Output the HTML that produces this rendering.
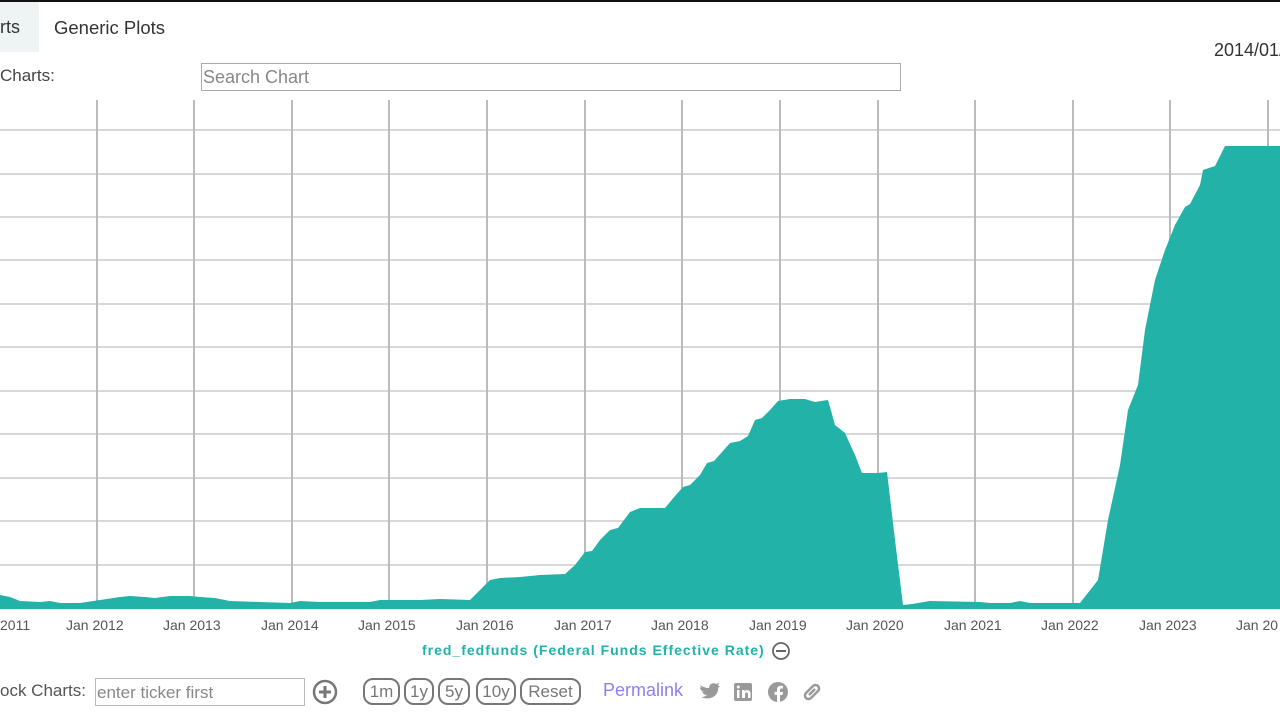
<!DOCTYPE html>
<html><head><meta charset="utf-8"><style>
body{margin:0;width:1280px;height:727px;overflow:hidden;background:#fff;font-family:"Liberation Sans",sans-serif;position:relative}
.t{position:absolute;white-space:nowrap}
.btn{position:absolute;top:678px;height:27px;border:2px solid #777;border-radius:10px;box-sizing:border-box;font-size:17px;color:#777;text-align:center;line-height:24px}
</style></head><body>
<div style="position:absolute;left:0;top:0;width:1280px;height:2px;background:#111"></div>
<div style="position:absolute;left:0;top:2px;width:39px;height:50px;background:#eef4f4"></div>
<div class="t" style="left:0;top:17px;font-size:18px;color:#333">rts</div>
<div class="t" style="left:54px;top:17px;font-size:18.5px;color:#333">Generic Plots</div>
<div class="t" style="left:1214px;top:40px;font-size:18px;color:#333">2014/01/</div>
<div class="t" style="left:0;top:66px;font-size:17px;color:#444">Charts:</div>
<div style="position:absolute;left:201px;top:63px;width:700px;height:28px;border:1px solid #aaa;box-sizing:border-box"></div>
<div class="t" style="left:203px;top:67px;font-size:18px;color:#888">Search Chart</div>
<svg style="position:absolute;left:0;top:0" width="1280" height="727">
<g stroke="#ccc" stroke-width="1.5">
<line x1="0" y1="130" x2="1280" y2="130"/><line x1="0" y1="174" x2="1280" y2="174"/><line x1="0" y1="217" x2="1280" y2="217"/><line x1="0" y1="260" x2="1280" y2="260"/><line x1="0" y1="304" x2="1280" y2="304"/><line x1="0" y1="347" x2="1280" y2="347"/><line x1="0" y1="391" x2="1280" y2="391"/><line x1="0" y1="434" x2="1280" y2="434"/><line x1="0" y1="478" x2="1280" y2="478"/><line x1="0" y1="521" x2="1280" y2="521"/><line x1="0" y1="565" x2="1280" y2="565"/>
</g>
<g stroke="#bbb" stroke-width="2">
<line x1="97" y1="100" x2="97" y2="609"/><line x1="194" y1="100" x2="194" y2="609"/><line x1="292" y1="100" x2="292" y2="609"/><line x1="389" y1="100" x2="389" y2="609"/><line x1="487" y1="100" x2="487" y2="609"/><line x1="585" y1="100" x2="585" y2="609"/><line x1="682" y1="100" x2="682" y2="609"/><line x1="780" y1="100" x2="780" y2="609"/><line x1="878" y1="100" x2="878" y2="609"/><line x1="975" y1="100" x2="975" y2="609"/><line x1="1073" y1="100" x2="1073" y2="609"/><line x1="1170" y1="100" x2="1170" y2="609"/><line x1="1268" y1="100" x2="1268" y2="609"/>
</g>
<polygon fill="#22b2a8" points="0,595 10,597 20,601 40,602 50,601 60,603 80,603 100,600 120,597 130,596 145,597 155,598 170,596 190,596 200,597 215,598 230,601 260,602 290,603 300,601 320,602 370,602 380,600 420,600 440,599 470,600 480,590 490,580 500,578 520,577 540,575 565,574 575,565 585,552 592,551 600,540 610,530 618,528 630,512 640,508 665,508 675,496 683,487 690,485 700,475 707,463 714,461 722,452 730,443 740,441 748,436 755,420 762,418 770,410 778,401 790,399 805,399 815,402 828,400 835,425 845,433 855,455 862,473 878,473 887,472 895,540 903,605 912,604 930,601 980,602 990,603 1010,603 1020,601 1030,603 1080,603 1098,580 1108,520 1120,465 1128,410 1138,385 1145,330 1155,280 1165,250 1175,225 1185,207 1190,204 1200,185 1203,170 1215,166 1225,146 1280,146 1280,609 0,609"/>
<g font-family="Liberation Sans" font-size="14" fill="#555">
<text x="0" y="630">2011</text><text x="66" y="630">Jan 2012</text><text x="163" y="630">Jan 2013</text><text x="261" y="630">Jan 2014</text><text x="358" y="630">Jan 2015</text><text x="456" y="630">Jan 2016</text><text x="554" y="630">Jan 2017</text><text x="651" y="630">Jan 2018</text><text x="749" y="630">Jan 2019</text><text x="846" y="630">Jan 2020</text><text x="944" y="630">Jan 2021</text><text x="1041" y="630">Jan 2022</text><text x="1139" y="630">Jan 2023</text><text x="1236" y="630">Jan 20</text>
</g>
<text x="422" y="655" font-family="Liberation Sans" font-size="14" font-weight="bold" fill="#22b2a8" letter-spacing="1">fred_fedfunds (Federal Funds Effective Rate)</text>
<circle cx="781" cy="651" r="8" fill="none" stroke="#666" stroke-width="1.8"/><line x1="776" y1="651" x2="786" y2="651" stroke="#666" stroke-width="2"/>
<circle cx="325" cy="692" r="11" fill="none" stroke="#777" stroke-width="2.5"/><path d="M325 686v12M319 692h12" stroke="#777" stroke-width="3"/>
<path d="M700 685c3 2 6 3 9 3 0-4 4-6 7-4l3-1-1 3 2 0c-1 1-2 2-2 3 0 7-8 12-17 8 3 0 5-1 6-2-3 0-4-2-5-3h2c-3-1-4-3-4-5l2 1c-2-2-2-4-2-6z" fill="#999"/>
<rect x="734" y="683" width="18" height="18" rx="2" fill="#999"/><rect x="737" y="690" width="2.5" height="8" fill="#fff"/><circle cx="738.3" cy="687" r="1.5" fill="#fff"/><path d="M742 690h2.5v1.5c1-2 6-2 6 2v4.5h-2.5v-4c0-2-3-2-3 0v4h-3z" fill="#fff"/>
<circle cx="778" cy="692" r="10" fill="#999"/><path d="M780 702v-7h2.5l.5-3h-3v-2c0-1 .5-1.5 1.5-1.5h1.5v-2.6c-4-.5-6 .5-6 4v2h-2.5v3h2.5v7z" fill="#fff"/>
<g fill="none" stroke="#999" stroke-width="2.5"><path d="M810 689l-4 4a3.5 3.5 0 0 0 5 5l3-3"/><path d="M814 695l4-4a3.5 3.5 0 0 0-5-5l-3 3"/><path d="M809 695l6-6"/></g>
</svg>
<div class="t" style="left:0;top:681px;font-size:17px;color:#555">ock Charts:</div>
<div style="position:absolute;left:95px;top:678px;width:210px;height:28px;border:1px solid #bbb;box-sizing:border-box"></div>
<div class="t" style="left:97px;top:683px;font-size:17px;color:#888">enter ticker first</div>
<div class="btn" style="left:363px;width:37px">1m</div>
<div class="btn" style="left:404px;width:30px">1y</div>
<div class="btn" style="left:438px;width:32px">5y</div>
<div class="btn" style="left:476px;width:40px">10y</div>
<div class="btn" style="left:520px;width:61px">Reset</div>
<div class="t" style="left:603px;top:680px;font-size:18px;color:#8e7ff0">Permalink</div>
</body></html>
